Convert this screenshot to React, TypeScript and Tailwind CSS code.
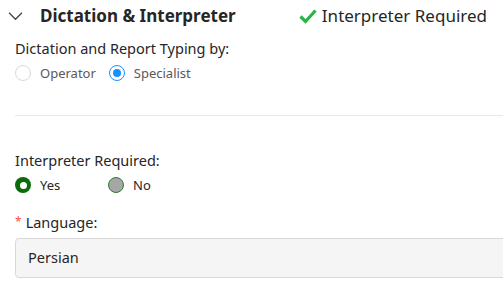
import React from "react";

function Radio({ variant, label, gap }: { variant: "off" | "blue" | "yes" | "no"; label: string; gap: string }) {
  let circle: React.ReactNode;
  if (variant === "off") {
    circle = <span className="w-4 h-4 rounded-full border border-[#d9d9d9] bg-white box-border" />;
  } else if (variant === "blue") {
    circle = (
      <span className="w-4 h-4 rounded-full border border-[#1890ff] bg-white box-border flex items-center justify-center">
        <span className="w-2 h-2 rounded-full bg-[#1890ff]" />
      </span>
    );
  } else if (variant === "yes") {
    circle = (
      <span className="w-4 h-4 rounded-full bg-[#0a6b0a] box-border flex items-center justify-center">
        <span className="w-[7px] h-[7px] rounded-full bg-white" />
      </span>
    );
  } else {
    circle = <span className="w-4 h-4 rounded-full border border-[#2e7d32] bg-[#a6a6a6] box-border" />;
  }
  return (
    <label className={`flex items-center ${gap}`}>
      <span className="flex items-center">{circle}</span>
      <span className="ml-[9px] text-[13px] leading-[22px]">{label}</span>
    </label>
  );
}

export default function App() {
  return (
    <div className="w-[503px] h-[293px] overflow-hidden bg-white text-[#262626]" style={{ fontFamily: '"Noto Sans", "Open Sans", sans-serif' }}>
      <div className="flex items-center h-[30px] pt-[1px]">
        <svg className="ml-[8px] w-[15px] h-[15px]" viewBox="0 0 14 14" fill="none" stroke="#444" strokeWidth="1.2">
          <path d="M1 4.5 L7 10.5 L13 4.5" />
        </svg>
        <span className="ml-[17px] text-[17px] font-bold">Dictation &amp; Interpreter</span>
        <span className="ml-auto mr-[16px] flex items-center">
          <svg className="w-[18px] h-[16px]" viewBox="0 0 18 16">
            <path d="M1.5 8.5 L6.5 13.5 L16.5 2.5" fill="none" stroke="#28b446" strokeWidth="3.2" />
          </svg>
          <span className="ml-[5px] text-[17px] text-[#262626]">Interpreter Required</span>
        </span>
      </div>

      <div className="px-[15px]">
        <div className="mt-[7px] text-[14.5px] leading-[22px]">Dictation and Report Typing by:</div>
        <div className="flex items-center mt-[3px] text-[#595959]">
          <Radio variant="off" label="Operator" gap="mr-[13px]" />
          <Radio variant="blue" label="Specialist" gap="" />
        </div>
        <div className="mt-[31px] border-t border-[#e8e8e8] mr-[-15px]" />
        <div className="mt-[33px] text-[14.5px] leading-[22px]">Interpreter Required:</div>
        <div className="flex items-center mt-[3px]">
          <div className="w-[93px]">
            <Radio variant="yes" label="Yes" gap="" />
          </div>
          <Radio variant="no" label="No" gap="" />
        </div>
        <div className="mt-[15px] text-[14.5px] leading-[22px] flex items-center">
          <span className="text-[#ff4d4f] mr-[4px] text-[12px]">*</span>
          <span>Language:</span>
        </div>
        <div className="mt-[5px] h-[40px] w-[500px] rounded-[4px] border border-[#d9d9d9] bg-[#f5f5f5] flex items-center px-[12px] text-[14.5px]">
          Persian
        </div>
      </div>
    </div>
  );
}
